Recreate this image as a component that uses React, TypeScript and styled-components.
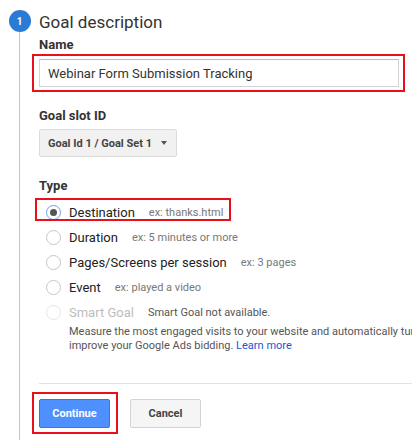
import styled, { createGlobalStyle } from "styled-components";

const GlobalStyle = createGlobalStyle`
    html, body {
        margin: 0;
        padding: 0;
        background: #fff;
        overflow: hidden;
    }
    body {
        font-family: Roboto, "Liberation Sans", Arial, sans-serif;
        color: #333;
    }
`;

const Page = styled.div`
    display: flex;
    flex-direction: row;
    width: 412px;
    height: 440px;
    overflow: hidden;
`;

const StepRail = styled.div`
    width: 39px;
    flex-shrink: 0;
    display: flex;
    flex-direction: column;
    align-items: center;
    padding-top: 10px;
    box-sizing: border-box;
`;

const StepBadge = styled.div`
    width: 22px;
    height: 22px;
    border-radius: 50%;
    background: #2a7bd5;
    color: #fff;
    font-size: 10px;
    font-weight: 700;
    display: flex;
    align-items: center;
    justify-content: center;
    flex-shrink: 0;
`;

const StepLine = styled.div`
    flex: 1;
    width: 1px;
    background: #c4c4c4;
`;

const Content = styled.div`
    flex-shrink: 0;
    width: 600px;
    display: flex;
    flex-direction: column;
    align-items: flex-start;
    padding-top: 10px;
`;

const Title = styled.h2`
    margin: 0;
    font-size: 17px;
    line-height: 24px;
    font-weight: 400;
    color: #333;
`;

const FieldLabel = styled.div<{ $gap: number }>`
    margin-top: ${(p) => p.$gap}px;
    font-size: 13px;
    line-height: 16px;
    font-weight: 700;
    color: #333;
`;

// red annotation box drawn over the marked element
const Marked = styled.div<{ $inset: string }>`
    position: relative;
    &::after {
        content: "";
        position: absolute;
        inset: ${(p) => p.$inset};
        border: 2px solid #e8111b;
        pointer-events: none;
    }
`;

const TextInput = styled.input`
    display: block;
    box-sizing: border-box;
    width: 360px;
    height: 28px;
    margin: 0;
    padding: 0 8px;
    border: 1px solid #d3d3d3;
    border-top-color: #b9b9b9;
    font-family: inherit;
    font-size: 13px;
    color: #333;
    outline: none;
`;

const SelectButton = styled.div`
    margin-top: 5px;
    box-sizing: border-box;
    height: 28px;
    padding: 0 9px 0 8px;
    display: flex;
    align-items: center;
    white-space: nowrap;
    background: #f1f1f1;
    border: 1px solid #dcdcdc;
    border-radius: 2px;
    font-size: 11px;
    font-weight: 700;
    color: #444;

    .caret {
        margin-left: 9px;
        width: 0;
        height: 0;
        border-left: 3.5px solid transparent;
        border-right: 3.5px solid transparent;
        border-top: 4px solid #555;
    }
`;

const RadioList = styled.div`
    margin-top: 6px;
    padding-left: 7px;
    display: flex;
    flex-direction: column;
    align-items: flex-start;
`;

const RadioRow = styled.label`
    height: 25px;
    display: flex;
    align-items: center;
`;

const RadioDot = styled.span<{ $checked?: boolean; $disabled?: boolean }>`
    box-sizing: border-box;
    width: 15px;
    height: 15px;
    border-radius: 50%;
    border: 1px solid
        ${(p) => (p.$checked ? "#6d9ef4" : p.$disabled ? "#e6e6e6" : "#c6c6c6")};
    background: #fff;
    display: flex;
    align-items: center;
    justify-content: center;
    margin-right: 8px;
    flex-shrink: 0;

    &::before {
        content: "";
        width: 7px;
        height: 7px;
        border-radius: 50%;
        background: ${(p) => (p.$checked ? "#555" : "transparent")};
    }
`;

const RadioText = styled.span<{ $disabled?: boolean }>`
    font-size: 13px;
    color: ${(p) => (p.$disabled ? "#bdbdbd" : "#222")};
    margin-right: 14px;
`;

const Hint = styled.span<{ $dark?: boolean }>`
    font-size: 11px;
    color: ${(p) => (p.$dark ? "#555" : "#777")};
`;

const Description = styled.p`
    margin: 0 0 0 30px;
    font-size: 11px;
    line-height: 14px;
    color: #555;
    white-space: nowrap;

    a {
        color: #1558d6;
        text-decoration: none;
    }
`;

const Divider = styled.hr`
    align-self: stretch;
    margin: 30px 0 0;
    border: none;
    border-top: 1px solid #e2e2e2;
`;

const ButtonRow = styled.div`
    margin-top: 15px;
    display: flex;
    flex-direction: row;
    gap: 20px;
`;

const Button = styled.button<{ $primary?: boolean }>`
    box-sizing: border-box;
    width: 71px;
    height: 29px;
    margin: 0;
    padding: 0;
    border-radius: 2px;
    border: 1px solid ${(p) => (p.$primary ? "#3079ed" : "#d3d3d3")};
    background: ${(p) => (p.$primary ? "#4d90fe" : "#f5f5f5")};
    color: ${(p) => (p.$primary ? "#fff" : "#444")};
    font-family: inherit;
    font-size: 11px;
    font-weight: 700;
    display: block;
`;

const types = [
    { label: "Duration", hint: "ex: 5 minutes or more" },
    { label: "Pages/Screens per session", hint: "ex: 3 pages" },
    { label: "Event", hint: "ex: played a video" },
];

export default function App() {
    return (
        <>
            <GlobalStyle />
            <Page>
                <StepRail>
                    <StepBadge>1</StepBadge>
                    <StepLine />
                </StepRail>
                <Content>
                    <Title>Goal description</Title>
                    <FieldLabel $gap={3}>Name</FieldLabel>
                    <Marked $inset="-5px -6px -5px -7px" style={{ marginTop: 6 }}>
                        <TextInput defaultValue="Webinar Form Submission Tracking" />
                    </Marked>

                    <FieldLabel $gap={21}>Goal slot ID</FieldLabel>
                    <SelectButton>
                        Goal Id 1 / Goal Set 1
                        <span className="caret" />
                    </SelectButton>

                    <FieldLabel $gap={21}>Type</FieldLabel>
                    <RadioList>
                        <Marked $inset="-2px -8px 4px -11px">
                            <RadioRow>
                                <RadioDot $checked />
                                <RadioText>Destination</RadioText>
                                <Hint>ex: thanks.html</Hint>
                            </RadioRow>
                        </Marked>
                        {types.map((t) => (
                            <RadioRow key={t.label}>
                                <RadioDot />
                                <RadioText>{t.label}</RadioText>
                                <Hint>{t.hint}</Hint>
                            </RadioRow>
                        ))}
                        <RadioRow>
                            <RadioDot $disabled />
                            <RadioText $disabled>Smart Goal</RadioText>
                            <Hint $dark>Smart Goal not available.</Hint>
                        </RadioRow>
                    </RadioList>
                    <Description>
                        Measure the most engaged visits to your website and automatically turn them into Goals. Then use those Goals to
                        <br />
                        improve your Google Ads bidding. <a href="#">Learn more</a>
                    </Description>

                    <Divider />
                    <ButtonRow>
                        <Marked $inset="-7px -8px -6px -7px">
                            <Button $primary>Continue</Button>
                        </Marked>
                        <Button>Cancel</Button>
                    </ButtonRow>
                </Content>
            </Page>
        </>
    );
}
